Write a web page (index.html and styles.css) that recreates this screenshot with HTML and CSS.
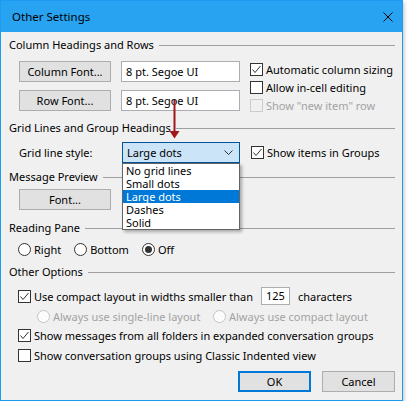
FILE: index.html
```html
<!DOCTYPE html>
<html lang="en">
<head>
    <meta charset="UTF-8">
    <meta name="viewport" content="width=device-width, initial-scale=1.0">
    <title>Other Settings</title>
    <link rel="stylesheet" href="styles.css">
</head>
<body>
    <div class="window">
        <div class="titlebar">
            <span class="title">Other Settings</span>
            <svg class="close" width="10" height="10" viewBox="0 0 10 10">
                <path d="M0.5 0.5 L9.5 9.5 M9.5 0.5 L0.5 9.5" stroke="#000" stroke-width="1"/>
            </svg>
        </div>

        <div class="content">
            <div class="group-title first">Column Headings and Rows</div>
            <div class="fonts">
                <div class="font-list">
                    <div class="font-row">
                        <button class="btn font-btn">Column Font...</button>
                        <div class="textbox">8 pt. Segoe UI</div>
                    </div>
                    <div class="font-row">
                        <button class="btn font-btn">Row Font...</button>
                        <div class="textbox">8 pt. Segoe UI</div>
                    </div>
                </div>
                <div class="checks">
                    <div class="check">
                        <span class="box"><svg width="11" height="11" viewBox="0 0 11 11"><polyline points="1.5,5.5 4,8.5 9.5,2" fill="none" stroke="#333" stroke-width="1"/></svg></span>
                        Automatic column sizing
                    </div>
                    <div class="check">
                        <span class="box"></span>
                        Allow in-cell editing
                    </div>
                    <div class="check disabled">
                        <span class="box"></span>
                        Show "new item" row
                    </div>
                </div>
            </div>

            <div class="group-title">Grid Lines and Group Headings</div>
            <div class="grid-row">
                <span class="field-label">Grid line style:</span>
                <div class="select">
                    <span>Large dots</span>
                    <svg width="9" height="5" viewBox="0 0 9 5"><polyline points="0.5,0.5 4.5,4.5 8.5,0.5" fill="none" stroke="#333" stroke-width="1"/></svg>
                    <ul class="select-list">
                        <li>No grid lines</li>
                        <li>Small dots</li>
                        <li class="active">Large dots</li>
                        <li>Dashes</li>
                        <li>Solid</li>
                    </ul>
                </div>
                <div class="check groups-check">
                    <span class="box"><svg width="11" height="11" viewBox="0 0 11 11"><polyline points="1.5,5.5 4,8.5 9.5,2" fill="none" stroke="#333" stroke-width="1"/></svg></span>
                    Show items in Groups
                </div>
            </div>

            <div class="group-title preview-title">Message Preview</div>
            <div class="preview-row">
                <button class="btn font-btn">Font...</button>
            </div>

            <div class="group-title pane-title">Reading Pane</div>
            <div class="radios">
                <span class="radio"><span class="dot"></span>Right</span>
                <span class="radio"><span class="dot"></span>Bottom</span>
                <span class="radio"><span class="dot on"></span>Off</span>
            </div>

            <div class="group-title options-title">Other Options</div>
            <div class="compact-row">
                <span class="box"><svg width="11" height="11" viewBox="0 0 11 11"><polyline points="1.5,5.5 4,8.5 9.5,2" fill="none" stroke="#333" stroke-width="1"/></svg></span>
                <span>Use compact layout in widths smaller than</span>
                <div class="numbox">125</div>
                <span>characters</span>
            </div>
            <div class="sub-radios">
                <span class="radio disabled single"><span class="dot"></span>Always use single-line layout</span>
                <span class="radio disabled"><span class="dot"></span>Always use compact layout</span>
            </div>
            <div class="check option first-option">
                <span class="box"><svg width="11" height="11" viewBox="0 0 11 11"><polyline points="1.5,5.5 4,8.5 9.5,2" fill="none" stroke="#333" stroke-width="1"/></svg></span>
                Show messages from all folders in expanded conversation groups
            </div>
            <div class="check option">
                <span class="box"></span>
                Show conversation groups using Classic Indented view
            </div>

            <div class="actions">
                <button class="btn action default">OK</button>
                <button class="btn action">Cancel</button>
            </div>
        </div>

        <svg class="pointer" width="12" height="40" viewBox="0 0 12 40">
            <line x1="5.5" y1="0" x2="5.5" y2="32" stroke="#a0161a" stroke-width="2"/>
            <polygon points="0.5,31 10.5,31 5.5,38.5" fill="#a0161a"/>
        </svg>
    </div>
</body>
</html>
```

FILE: styles.css
```css
* {
    box-sizing: border-box;
}
body {
    margin: 0;
    background: #fff;
    font-family: "Noto Sans", sans-serif;
    font-size: 11px;
    color: #000;
}
.window {
    position: relative;
    width: 403px;
    height: 401px;
    border: 1px solid #1c9cf0;
    background: #f0f0f0;
    box-shadow: 1px 2px 4px rgba(0,0,0,0.25);
}
.titlebar {
    height: 31px;
    background: #27a3f1;
    display: flex;
    align-items: center;
    justify-content: space-between;
    padding: 0 9px 0 11px;
}
.title {
    font-size: 11.5px;
    line-height: 16px;
}
.content {
    padding: 0 7px 0 8px;
}

/* group headings with the etched rule after the text */
.group-title {
    display: flex;
    align-items: center;
    height: 16px;
    line-height: 16px;
    margin-top: 6px;
    white-space: nowrap;
}
.group-title::after {
    content: "";
    flex: 1;
    height: 1px;
    background: #a0a0a0;
    margin-left: 5px;
}
.group-title.first {
    margin-top: 5px;
}
.preview-title {
    margin-top: 6px;
}
.pane-title {
    margin-top: 10px;
}
.options-title {
    margin-top: 7px;
}

.btn {
    font-family: inherit;
    font-size: 11px;
    color: #000;
    background: #e1e1e1;
    border: 1px solid #adadad;
    padding: 0;
    height: 21px;
}
.font-btn {
    width: 92px;
}

.fonts {
    display: flex;
    margin-top: 7px;
}
.font-list {
    padding: 1px 0 0 10px;
    display: flex;
    flex-direction: column;
    gap: 8px;
}
.font-row {
    display: flex;
    gap: 10px;
}
.textbox {
    width: 119px;
    height: 21px;
    background: #fff;
    border: 1px solid #abadb3;
    padding-left: 4px;
    line-height: 19px;
}
.checks {
    margin-left: 10px;
}

.check {
    display: flex;
    align-items: center;
    height: 18px;
    white-space: nowrap;
}
.box {
    width: 13px;
    height: 13px;
    border: 1px solid #333;
    background: #fff;
    margin-right: 3px;
    flex-shrink: 0;
}
.box svg {
    display: block;
}
.check.disabled {
    color: #a3a3a3;
}
.check.disabled .box {
    border-color: #ccc;
    background: #f0f0f0;
}

.grid-row {
    display: flex;
    align-items: center;
    height: 21px;
    margin-top: 6px;
    padding-left: 10px;
}
.field-label {
    width: 103px;
}
.select {
    position: relative;
    width: 118px;
    height: 21px;
    background: #cce4f7;
    border: 1px solid #005499;
    display: flex;
    align-items: center;
    justify-content: space-between;
    padding: 0 6px 0 4px;
}
.select-list {
    position: absolute;
    top: 20px;
    left: -1px;
    width: 118px;
    margin: 0;
    padding: 0;
    list-style: none;
    background: #fff;
    border: 1px solid #646464;
    box-shadow: 2px 2px 3px rgba(0,0,0,0.3);
    z-index: 2;
}
.select-list li {
    height: 13px;
    line-height: 13px;
    padding-left: 3px;
}
.select-list li.active {
    background: #0078d7;
    color: #fff;
}
.groups-check {
    margin-left: 11px;
}

.preview-row {
    margin-top: 4px;
    padding-left: 10px;
}

.radios {
    display: flex;
    align-items: center;
    height: 16px;
    margin-top: 5px;
    padding-left: 9px;
    gap: 13px;
}
.radio {
    display: flex;
    align-items: center;
    white-space: nowrap;
}
.dot {
    width: 13px;
    height: 13px;
    border: 1px solid #333;
    border-radius: 50%;
    background: #fff;
    margin-right: 3px;
    display: flex;
    align-items: center;
    justify-content: center;
}
.dot.on::after {
    content: "";
    width: 7px;
    height: 7px;
    border-radius: 50%;
    background: #333;
}
.radio.disabled {
    color: #a3a3a3;
}
.radio.disabled .dot {
    border-color: #c4c4c4;
    background: #fcfcfc;
}

.compact-row {
    display: flex;
    align-items: center;
    height: 20px;
    margin-top: 6px;
    padding-left: 9px;
    white-space: nowrap;
}
.numbox {
    width: 29px;
    height: 18px;
    background: #fff;
    border: 1px solid #abadb3;
    padding-left: 4px;
    line-height: 16px;
    margin: 0 8px;
}
.sub-radios {
    display: flex;
    align-items: center;
    height: 16px;
    margin-top: 2px;
    padding-left: 28px;
}
.sub-radios .single {
    width: 176px;
}
.option {
    height: 16px;
    margin-top: 4px;
    padding-left: 9px;
}
.option.first-option {
    margin-top: 3px;
}

.actions {
    display: flex;
    justify-content: flex-end;
    gap: 11px;
    margin-top: 8px;
}
.action {
    width: 73px;
}
.action.default {
    border: 2px solid #0078d7;
}

.pointer {
    position: absolute;
    left: 168px;
    top: 99px;
    z-index: 3;
}
```
